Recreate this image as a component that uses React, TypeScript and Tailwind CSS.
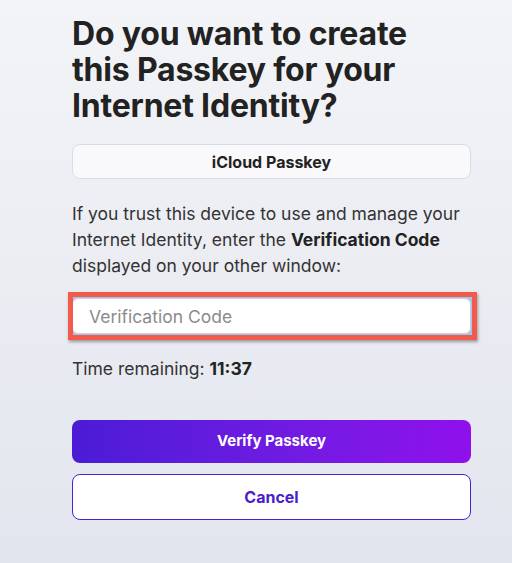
export default function App() {
  return (
    <div
      className="min-h-screen w-full bg-gradient-to-b from-[#f3f4f7] to-[#e3e5ee] text-[#222]"
      style={{ fontFamily: 'Inter, "Noto Sans", sans-serif' }}
    >
      <div className="ml-[72px] w-[399px] pt-4">
        {/* Heading */}
        <h1 className="text-[32px] font-bold leading-[36px] tracking-[-0.2px] text-[#222]">
          Do you want to create this Passkey for your Internet Identity?
        </h1>

        {/* Passkey name */}
        <div className="mt-5 flex h-[35px] items-center justify-center rounded-lg border border-[#d9dbe8] bg-[#f9f9fc] text-[16px] font-bold text-[#222]">
          iCloud Passkey
        </div>

        {/* Explanation */}
        <p className="mt-[22px] text-[17.5px] leading-[26px] text-[#333]">
          If you trust this device to use and manage your Internet Identity, enter the{' '}
          <span className="font-bold text-[#222]">Verification Code</span> displayed on your other window:
        </p>

        {/* Code input with annotation frame */}
        <div className="relative mt-[19px]">
          <input
            type="text"
            placeholder="Verification Code"
            className="h-[36px] w-full rounded-md border border-[#ccd0de] bg-white px-4 text-[17.5px] text-[#222] shadow-[0_0_0_4px_rgba(94,170,230,0.55)] outline-none placeholder:text-[#8b8b8b]"
          />
          <div className="pointer-events-none absolute -top-[6px] -left-[4px] -right-[6px] -bottom-[6px] border-[5px] border-[#f25a4c] shadow-[1px_2px_3px_rgba(0,0,0,0.35)]" />
        </div>

        {/* Countdown */}
        <p className="mt-[22px] text-[17.5px] leading-[26px] text-[#333]">
          Time remaining: <span className="font-bold text-[#222]">11:37</span>
        </p>

        {/* Actions */}
        <div className="mt-[38px] flex flex-col gap-[11px]">
          <button className="h-[43px] w-full rounded-lg bg-gradient-to-r from-[#4b1bd6] to-[#8f10ec] text-[15px] font-bold text-white">
            Verify Passkey
          </button>
          <button className="h-[46px] w-full rounded-lg border border-[#4c1ed8] bg-white text-[16px] font-bold text-[#4a1ccd]">
            Cancel
          </button>
        </div>
      </div>
    </div>
  );
}
